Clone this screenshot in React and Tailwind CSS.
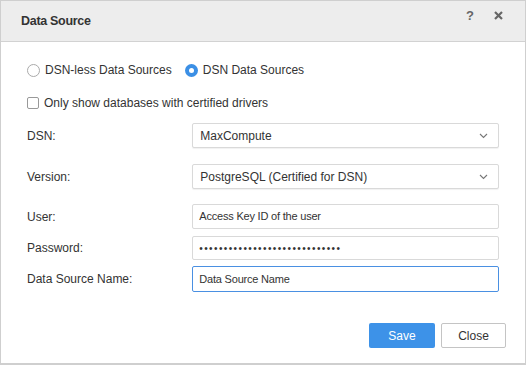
import React, { useState } from "react";

const Chevron = () => (
  <svg width="9" height="6" viewBox="0 0 9 6" className="text-[#777]">
    <path d="M1 1l3.5 3.5L8 1" fill="none" stroke="currentColor" strokeWidth="1.1" />
  </svg>
);

const SelectBox = ({ value }) => (
  <div className="flex h-[25px] w-[308px] items-center justify-between rounded-[2px] border border-[#d9d9d9] bg-white pl-[7px] pr-[10px] text-[12px] text-[#333] shadow-[0_1px_1px_rgba(0,0,0,0.06)]">
    <span>{value}</span>
    <Chevron />
  </div>
);

const Row = ({ label, children, className = "" }) => (
  <div className={`flex items-center ${className}`}>
    <div className="w-[166px] text-[12px] text-[#333]">{label}</div>
    {children}
  </div>
);

export default function App() {
  const [name, setName] = useState("Data Source Name");

  return (
    <div className="h-[367px] w-[528px] bg-white font-['Liberation_Sans',Arial,sans-serif]">
      <div className="flex h-[365px] w-[526px] flex-col border border-b-2 border-[#cfcfcf] bg-white">
        {/* header */}
        <div className="flex h-[41px] items-center justify-between border-b border-[#d2d2d2] bg-[#ededed] pl-[20px] pr-[22px]">
          <h1 className="text-[12.5px] font-bold tracking-[-0.3px] text-[#333]">Data Source</h1>
          <div className="mb-[11px] flex items-center gap-[20px] text-[#666]">
            <span className="text-[13px] font-bold">?</span>
            <svg width="9" height="9" viewBox="0 0 9 9">
              <path d="M1 1l7 7M8 1L1 8" stroke="currentColor" strokeWidth="2.2" />
            </svg>
          </div>
        </div>

        {/* body */}
        <div className="flex flex-1 flex-col px-[26px] pt-[19px]">
          <div className="flex items-center text-[12px] text-[#333]">
            <label className="flex items-center">
              <span className="mr-[5px] h-[13px] w-[13px] rounded-full border border-[#aaa] bg-white" />
              DSN-less Data Sources
            </label>
            <label className="ml-[13px] flex items-center">
              <span className="mr-[5px] flex h-[13px] w-[13px] items-center justify-center rounded-full bg-[#3b8fe5]">
                <span className="h-[5px] w-[5px] rounded-full bg-white" />
              </span>
              DSN Data Sources
            </label>
          </div>

          <label className="mt-[15px] flex items-center text-[12px] text-[#333]">
            <span className="mr-[5px] h-[12px] w-[12px] rounded-[2px] border border-[#999] bg-white" />
            Only show databases with certified drivers
          </label>

          <Row label="DSN:" className="mt-[11px]">
            <SelectBox value="MaxCompute" />
          </Row>
          <Row label="Version:" className="mt-[16px]">
            <SelectBox value="PostgreSQL (Certified for DSN)" />
          </Row>
          <Row label="User:" className="mt-[15px]">
            <div className="flex h-[25px] w-[308px] items-center rounded-[2px] border border-[#d9d9d9] px-[6px] text-[11px] tracking-[-0.2px] text-[#333]">
              Access Key ID of the user
            </div>
          </Row>
          <Row label="Password:" className="mt-[7px]">
            <div className="flex h-[24px] w-[308px] items-center rounded-[2px] border border-[#d9d9d9] px-[6px] text-[10px] tracking-[1.4px] text-[#333]">
              {"•".repeat(29)}
            </div>
          </Row>
          <Row label="Data Source Name:" className="mt-[6px]">
            <input
              value={name}
              onChange={(e) => setName(e.target.value)}
              className="h-[26px] w-[308px] rounded-[2px] border border-[#4a90e2] px-[6px] text-[11px] tracking-[-0.2px] text-[#333] outline-none"
            />
          </Row>

          <div className="-mr-[7px] mt-[31px] flex justify-end gap-[6px]">
            <button className="h-[25px] w-[66px] rounded-[2px] bg-[#3d92e8] text-[12px] text-white">
              Save
            </button>
            <button className="h-[25px] w-[65px] rounded-[2px] border border-[#c4c4c4] bg-white text-[12px] text-[#333]">
              Close
            </button>
          </div>
        </div>
      </div>
    </div>
  );
}
